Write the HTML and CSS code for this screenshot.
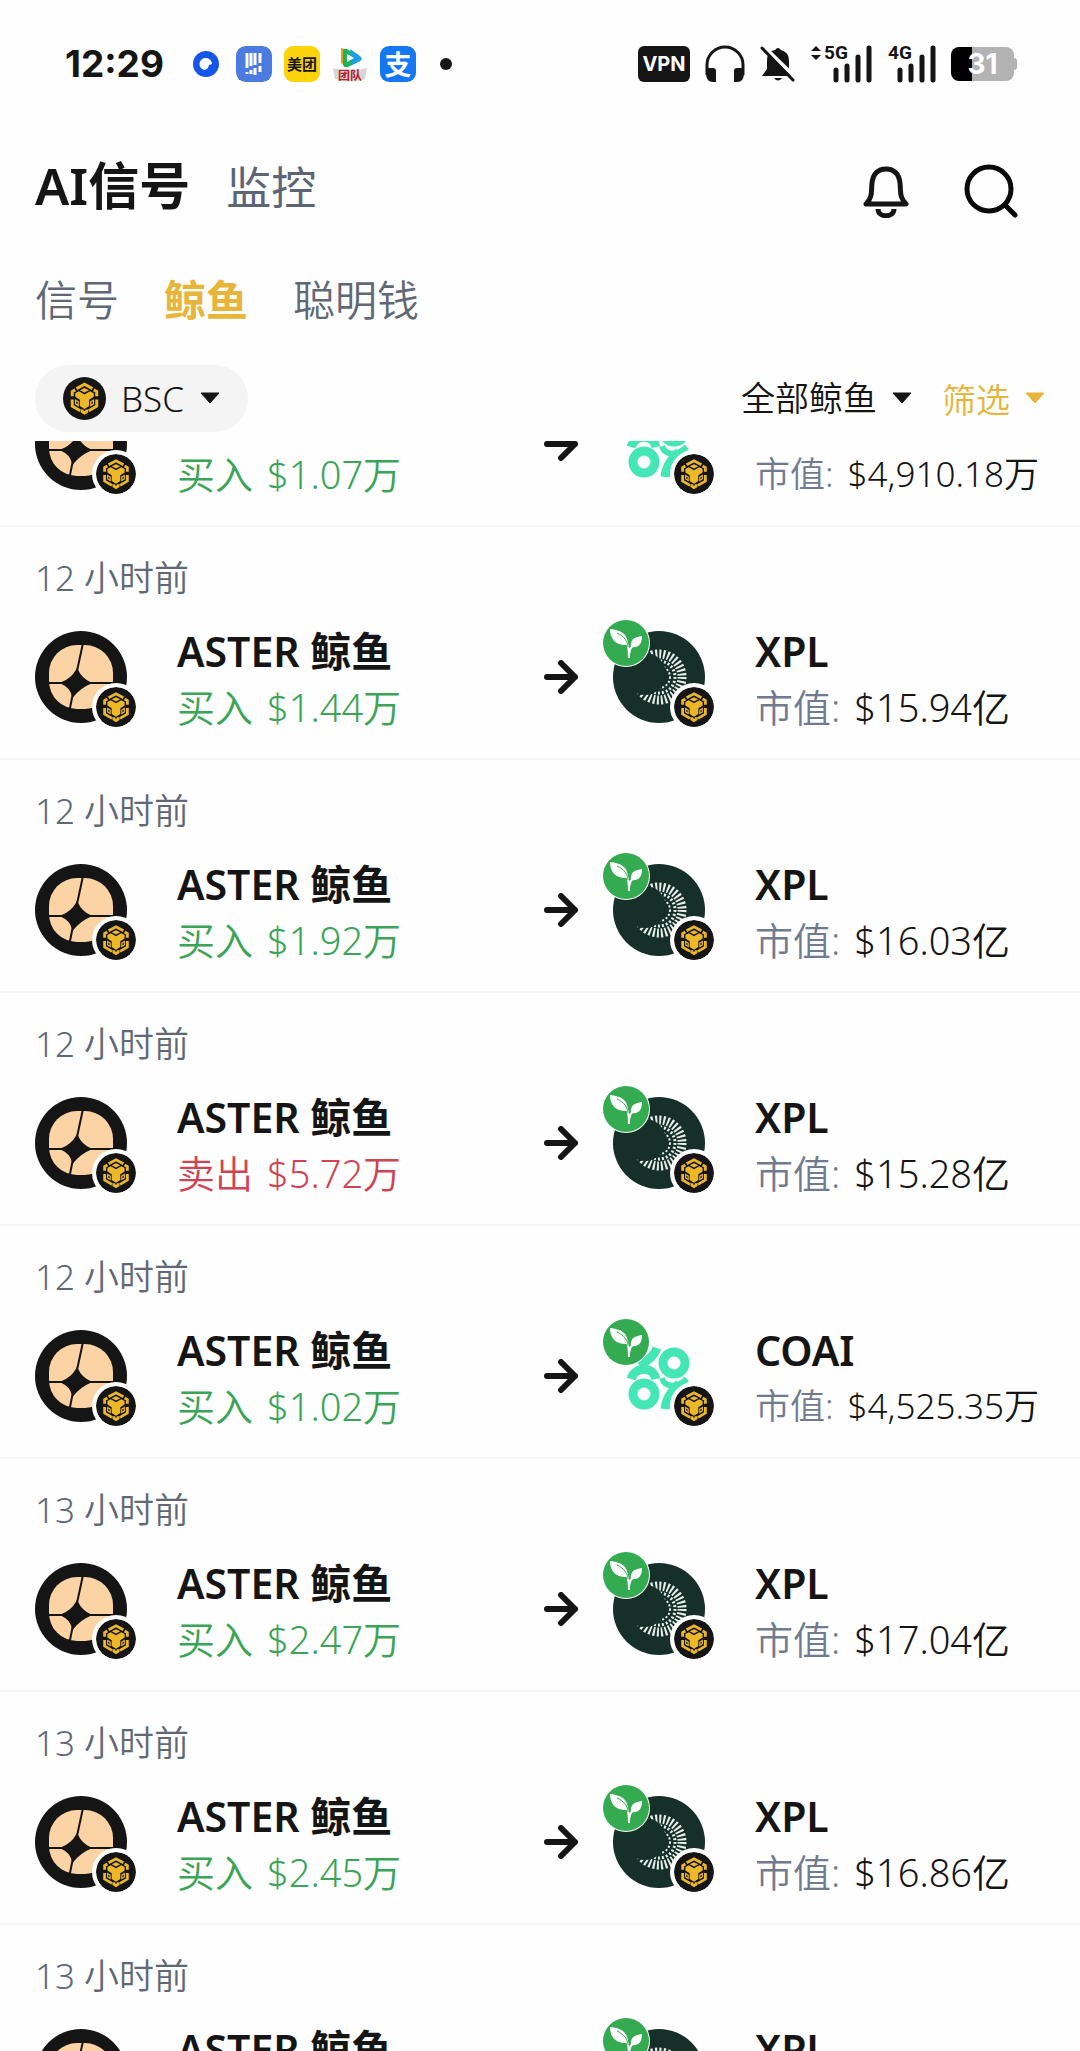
FILE: index.html
```
<!DOCTYPE html>
<html lang="zh-CN">
<head>
  <meta charset="UTF-8" />
  <meta name="viewport" content="width=device-width, initial-scale=1.0"/>
  <title>AI信号</title>
  <link rel="stylesheet" href="styles.css">
</head>
<body>
  <!-- Shared icons -->
  <svg class="sprite" aria-hidden="true">
    <symbol id="bnb" viewBox="0 0 130 130">
      <circle cx="65" cy="65" r="65" fill="#151515"/>
      <g fill="none" stroke="#ecb82a" stroke-width="9">
        <path d="M41 35L65 22L89 35"/>
        <path d="M28 58V44L37 39M102 58V44L93 39"/>
        <path d="M28 68V88L52 102M102 68V88L78 102"/>
        <path d="M58 98V105L65 109L72 105V98"/>
      </g>
      <path d="M65 33L79 40L65 47L51 40Z" fill="#ecb82a"/>
      <path d="M37 49L48 43L65 53L82 43L93 49V60L79 69V88L65 97L51 88V69L37 60Z" fill="#ecb82a"/>
      <path d="M38 70V81L46 86V75ZM92 70V81L84 86V75Z" fill="#151515" stroke="#ecb82a" stroke-width="4"/>
    </symbol>
    <symbol id="aster" viewBox="0 0 92 92">
      <circle cx="46" cy="46" r="46" fill="#151515"/>
      <rect x="14" y="14" width="64" height="64" rx="28" fill="#fbd3a5"/>
      <path d="M48 12L42 40M38 62L34 82M10 52H82" fill="none" stroke="#151515" stroke-width="2"/>
      <path d="M42 39Q46 48 55 52Q45 56 38 65Q36 56 27 52Q37 48 42 39Z" fill="#151515" stroke="#151515" stroke-width="2"/>
    </symbol>
    <symbol id="xpl" viewBox="0 0 92 92">
      <circle cx="46" cy="46" r="46" fill="#162f29"/>
      <g fill="none" stroke="#e6eeea">
        <circle cx="46" cy="46" r="23" stroke-width="9" stroke-dasharray="2 2"/>
        <circle cx="46" cy="46" r="16" stroke-width="3" stroke-dasharray="2 2"/>
        <circle cx="46" cy="46" r="11" stroke-width="2" stroke-dasharray="2 2"/>
      </g>
      <circle cx="32" cy="43" r="21" fill="#162f29"/>
    </symbol>
    <symbol id="coai" viewBox="0 0 92 92">
      <g fill="none" stroke="#45e6b5" stroke-width="9">
        <circle cx="61" cy="33" r="11"/>
        <circle cx="31" cy="64" r="11"/>
        <path d="M44 18C41 26 36 29 27 36"/>
        <path d="M18 49C22 36 40 36 43 49"/>
        <path d="M49 48C52 58 64 58 74 49" stroke-width="6"/>
        <path d="M66 54C59 61 53 68 52 79"/>
      </g>
    </symbol>
    <symbol id="leaf" viewBox="0 0 48 48">
      <circle cx="24" cy="24" r="24" fill="#fff"/>
      <circle cx="24" cy="24" r="23" fill="#34ab50"/>
      <path d="M8 10C19 11 26 15 26 26C15 27 8 21 8 10Z" fill="#fff"/>
      <path d="M40 17C40 26 36 29 29 28C28 21 32 18 40 17Z" fill="#fff"/>
      <path d="M25 24C27 29 27 32 27 39M31 26C28 29 28 31 27 35" fill="none" stroke="#fff" stroke-width="2"/>
      <path d="M15 14C22 17 26 23 26 28" fill="none" stroke="#34ab50" stroke-width="1"/>
    </symbol>
    <symbol id="arrow" viewBox="0 0 34 34">
      <path d="M3 17H31M17 3L31 17L17 31" fill="none" stroke="#151515" stroke-width="6" stroke-linecap="round" stroke-linejoin="round"/>
    </symbol>
    <symbol id="caret" viewBox="0 0 20 12">
      <path d="M1 1H19L10 11Z" fill="currentColor" stroke="currentColor" stroke-linejoin="round"/>
    </symbol>
  </svg>

  <div class="status-bar">
    <div class="status-left">
      <span class="clock">12:29</span>
      <svg class="app-dot" viewBox="0 0 26 26"><circle cx="13" cy="13" r="13" fill="#1556e8"/><path d="M13 7A6 6 0 0 1 19 13L16 14L15 17L12 19A6 6 0 1 1 13 7Z" fill="#fff"/></svg>
      <svg class="app-icon" viewBox="0 0 36 36"><rect width="36" height="36" rx="9" fill="#4b7be0"/><path d="M11 7V22M15 7V20M19 7V19M24 7V17M11 26V28M15 24V28M19 22V29M24 20V26" fill="none" stroke="#fff" stroke-width="3"/></svg>
      <span class="app-icon meituan">美团</span>
      <span class="app-icon video">
        <svg viewBox="0 0 36 36"><path d="M9 3Q9 1 12 3V19L9 17Z" fill="#f39a1d"/><path d="M11 4Q12 2 15 3L28 11Q31 13 28 15L16 21Q12 22 11 19Z" fill="#1cb35b"/><path d="M18 3L28 10Q31 13 28 15L20 19Z" fill="#1d9fe8"/><path d="M15 8L22 12L15 16Z" fill="#fff"/><path d="M1 22Q18 27 35 22L33 33Q18 38 3 33Z" fill="#d9d5d2"/></svg>
        <b>团队</b>
      </span>
      <span class="app-icon alipay">支</span>
      <span class="more-dot"></span>
    </div>
    <div class="status-right">
      <span class="vpn">VPN</span>
      <svg class="headphones" viewBox="0 0 40 38"><path d="M2 30V20A18 18 0 0 1 38 20V30" fill="none" stroke="#151515" stroke-width="3"/><path d="M1 23H8Q11 23 11 26V37H8Q1 37 1 28ZM39 23H32Q29 23 29 26V37H32Q39 37 39 28Z" fill="#151515"/></svg>
      <svg class="muted" viewBox="0 0 36 36"><path d="M2 30L7 23V15Q7 5 15 4Q18 0 21 4Q29 6 29 15V23L34 30Z" fill="#151515"/><path d="M14 32H22Q18 37 14 32Z" fill="#151515"/><path d="M3 0L36 32" stroke="#fff" stroke-width="4"/><path d="M2 2L33 34" stroke="#151515" stroke-width="3" stroke-linecap="round"/></svg>
      <span class="signal signal-5g">
        <svg viewBox="0 0 62 38"><path d="M0 6L5 1L10 6ZM0 10H10L5 15Z" fill="#151515"/><path d="M25 25V35M36 21V35M47 12V35M58 3V35" stroke="#151515" stroke-width="5" stroke-linecap="round"/></svg>
        <b>5G</b>
      </span>
      <span class="signal signal-4g">
        <svg viewBox="0 0 48 38"><path d="M12 25V35M23 21V35M34 12V35M45 3V35" stroke="#151515" stroke-width="5" stroke-linecap="round"/></svg>
        <b>4G</b>
      </span>
      <span class="battery">31</span>
    </div>
  </div>

  <header class="header">
    <nav class="sections">
      <a href="#ai" class="section active">AI信号</a>
      <a href="#monitor" class="section">监控</a>
    </nav>
    <div class="actions">
      <button type="button" aria-label="通知">
        <svg class="bell" viewBox="0 0 46 54"><path d="M3 40C10 33 8 27 9 19C10 10 15 5 23 5S36 10 37 19C38 27 36 33 43 40Z" fill="none" stroke="#151515" stroke-width="5" stroke-linejoin="round"/><path d="M15 45C15 54 31 54 31 45" fill="none" stroke="#151515" stroke-width="5"/></svg>
      </button>
      <button type="button" aria-label="搜索">
        <svg class="search" viewBox="0 0 54 54"><circle cx="25" cy="25" r="22" fill="none" stroke="#0a0a0a" stroke-width="5"/><path d="M41 41L51 51" stroke="#0a0a0a" stroke-width="5" stroke-linecap="round"/></svg>
      </button>
    </div>
  </header>

  <nav class="tabs">
    <a href="#signal">信号</a>
    <a href="#whale" class="active">鲸鱼</a>
    <a href="#smart">聪明钱</a>
  </nav>

  <div class="filters">
    <label class="picker chain-picker">
      <svg class="chain-icon"><use href="#bnb"/></svg>
      <select aria-label="链"><option>BSC</option></select>
      <svg class="caret"><use href="#caret"/></svg>
    </label>
    <label class="picker">
      <select aria-label="鲸鱼"><option>全部鲸鱼</option></select>
      <svg class="caret"><use href="#caret"/></svg>
    </label>
    <button type="button" class="picker filter-button">筛选 <svg class="caret"><use href="#caret"/></svg></button>
  </div>

  <main class="feed">
    <ul class="feed-list">
      <li class="row">
        <div class="trade">
          <div class="party">
            <div class="avatar"><svg><use href="#aster"/></svg><svg class="chain-badge"><use href="#bnb"/></svg></div>
            <div class="info"><p class="buy"><span>买入</span> $1.07万</p></div>
          </div>
          <svg class="arrow"><use href="#arrow"/></svg>
          <div class="party">
            <div class="avatar"><svg><use href="#coai"/></svg><svg class="chain-badge"><use href="#bnb"/></svg></div>
            <div class="info"><p class="cap long"><span>市值:</span> $4,910.18万</p></div>
          </div>
        </div>
      </li>
      <li class="row">
        <time class="time">12 小时前</time>
        <div class="trade">
          <div class="party">
            <div class="avatar"><svg><use href="#aster"/></svg><svg class="chain-badge"><use href="#bnb"/></svg></div>
            <div class="info"><h2>ASTER 鲸鱼</h2><p class="buy"><span>买入</span> $1.44万</p></div>
          </div>
          <svg class="arrow"><use href="#arrow"/></svg>
          <div class="party">
            <div class="avatar"><svg><use href="#xpl"/></svg><svg class="leaf-badge"><use href="#leaf"/></svg><svg class="chain-badge"><use href="#bnb"/></svg></div>
            <div class="info"><h2>XPL</h2><p class="cap"><span>市值:</span> $15.94亿</p></div>
          </div>
        </div>
      </li>
      <li class="row">
        <time class="time">12 小时前</time>
        <div class="trade">
          <div class="party">
            <div class="avatar"><svg><use href="#aster"/></svg><svg class="chain-badge"><use href="#bnb"/></svg></div>
            <div class="info"><h2>ASTER 鲸鱼</h2><p class="buy"><span>买入</span> $1.92万</p></div>
          </div>
          <svg class="arrow"><use href="#arrow"/></svg>
          <div class="party">
            <div class="avatar"><svg><use href="#xpl"/></svg><svg class="leaf-badge"><use href="#leaf"/></svg><svg class="chain-badge"><use href="#bnb"/></svg></div>
            <div class="info"><h2>XPL</h2><p class="cap"><span>市值:</span> $16.03亿</p></div>
          </div>
        </div>
      </li>
      <li class="row">
        <time class="time">12 小时前</time>
        <div class="trade">
          <div class="party">
            <div class="avatar"><svg><use href="#aster"/></svg><svg class="chain-badge"><use href="#bnb"/></svg></div>
            <div class="info"><h2>ASTER 鲸鱼</h2><p class="sell"><span>卖出</span> $5.72万</p></div>
          </div>
          <svg class="arrow"><use href="#arrow"/></svg>
          <div class="party">
            <div class="avatar"><svg><use href="#xpl"/></svg><svg class="leaf-badge"><use href="#leaf"/></svg><svg class="chain-badge"><use href="#bnb"/></svg></div>
            <div class="info"><h2>XPL</h2><p class="cap"><span>市值:</span> $15.28亿</p></div>
          </div>
        </div>
      </li>
      <li class="row">
        <time class="time">12 小时前</time>
        <div class="trade">
          <div class="party">
            <div class="avatar"><svg><use href="#aster"/></svg><svg class="chain-badge"><use href="#bnb"/></svg></div>
            <div class="info"><h2>ASTER 鲸鱼</h2><p class="buy"><span>买入</span> $1.02万</p></div>
          </div>
          <svg class="arrow"><use href="#arrow"/></svg>
          <div class="party">
            <div class="avatar"><svg><use href="#coai"/></svg><svg class="leaf-badge"><use href="#leaf"/></svg><svg class="chain-badge"><use href="#bnb"/></svg></div>
            <div class="info"><h2>COAI</h2><p class="cap long"><span>市值:</span> $4,525.35万</p></div>
          </div>
        </div>
      </li>
      <li class="row">
        <time class="time">13 小时前</time>
        <div class="trade">
          <div class="party">
            <div class="avatar"><svg><use href="#aster"/></svg><svg class="chain-badge"><use href="#bnb"/></svg></div>
            <div class="info"><h2>ASTER 鲸鱼</h2><p class="buy"><span>买入</span> $2.47万</p></div>
          </div>
          <svg class="arrow"><use href="#arrow"/></svg>
          <div class="party">
            <div class="avatar"><svg><use href="#xpl"/></svg><svg class="leaf-badge"><use href="#leaf"/></svg><svg class="chain-badge"><use href="#bnb"/></svg></div>
            <div class="info"><h2>XPL</h2><p class="cap"><span>市值:</span> $17.04亿</p></div>
          </div>
        </div>
      </li>
      <li class="row">
        <time class="time">13 小时前</time>
        <div class="trade">
          <div class="party">
            <div class="avatar"><svg><use href="#aster"/></svg><svg class="chain-badge"><use href="#bnb"/></svg></div>
            <div class="info"><h2>ASTER 鲸鱼</h2><p class="buy"><span>买入</span> $2.45万</p></div>
          </div>
          <svg class="arrow"><use href="#arrow"/></svg>
          <div class="party">
            <div class="avatar"><svg><use href="#xpl"/></svg><svg class="leaf-badge"><use href="#leaf"/></svg><svg class="chain-badge"><use href="#bnb"/></svg></div>
            <div class="info"><h2>XPL</h2><p class="cap"><span>市值:</span> $16.86亿</p></div>
          </div>
        </div>
      </li>
      <li class="row">
        <time class="time">13 小时前</time>
        <div class="trade">
          <div class="party">
            <div class="avatar"><svg><use href="#aster"/></svg><svg class="chain-badge"><use href="#bnb"/></svg></div>
            <div class="info"><h2>ASTER 鲸鱼</h2></div>
          </div>
          <svg class="arrow"><use href="#arrow"/></svg>
          <div class="party">
            <div class="avatar"><svg><use href="#xpl"/></svg><svg class="leaf-badge"><use href="#leaf"/></svg><svg class="chain-badge"><use href="#bnb"/></svg></div>
            <div class="info"><h2>XPL</h2></div>
          </div>
        </div>
      </li>
    </ul>
  </main>
</body>
</html>
```
FILE: styles.css
```
* {
  box-sizing: border-box;
}

body {
  display: flex;
  flex-direction: column;
  height: 100vh;
  margin: 0;
  overflow: hidden;
  background-color: #fefefe;
  color: #151515;
  font-family: "Noto Sans", "Noto Sans CJK SC", sans-serif;
  font-size: 35px;
  font-weight: 350;
}

a {
  color: inherit;
  text-decoration: none;
}

button,
select {
  padding: 0;
  border: none;
  background: none;
  color: inherit;
  font: inherit;
  cursor: pointer;
}

svg {
  display: block;
}

.sprite {
  position: absolute;
  width: 0;
  height: 0;
}

/* Status bar */
.status-bar {
  display: flex;
  align-items: center;
  justify-content: space-between;
  flex: none;
  height: 127px;
  padding: 0 63px 0 65px;
  font-family: Inter, sans-serif;
}

.status-left {
  display: flex;
  align-items: center;
  gap: 12px;
}

.clock {
  margin-right: 17px;
  font-size: 37px;
  font-weight: 700;
}

.app-dot {
  width: 26px;
  height: 26px;
  margin-right: 5px;
}

.app-icon {
  width: 36px;
  height: 36px;
  border-radius: 9px;
}

.meituan,
.alipay {
  display: flex;
  align-items: center;
  justify-content: center;
  font-family: "Noto Sans CJK SC", sans-serif;
  font-weight: 700;
  white-space: nowrap;
}

.meituan {
  background-color: #fcd20a;
  font-size: 15px;
}

.alipay {
  background-color: #1677f5;
  color: #fff;
  font-size: 27px;
}

.video {
  position: relative;
}

.video b {
  position: absolute;
  inset: auto 0 0;
  color: #b3202c;
  font-family: "Noto Sans CJK SC", sans-serif;
  font-size: 12px;
  font-weight: 700;
  line-height: 14px;
  text-align: center;
}

.more-dot {
  width: 12px;
  height: 12px;
  margin-left: 12px;
  border-radius: 50%;
  background-color: #151515;
}

.status-right {
  display: flex;
  align-items: center;
  gap: 15px;
}

.vpn {
  width: 52px;
  border-radius: 6px;
  background-color: #151515;
  color: #fff;
  font-size: 20px;
  font-weight: 700;
  line-height: 36px;
  text-align: center;
}

.headphones {
  width: 40px;
  height: 38px;
}

.muted {
  width: 36px;
  height: 36px;
}

.signal {
  position: relative;
  height: 38px;
}

.signal svg {
  height: 38px;
}

.signal b {
  position: absolute;
  top: 0;
  left: 0;
  font-family: Roboto, sans-serif;
  font-size: 19px;
  font-weight: 700;
  line-height: 16px;
}

.signal-5g svg {
  width: 62px;
}

.signal-5g b {
  left: 13px;
}

.signal-4g svg {
  width: 48px;
}

.battery {
  position: relative;
  width: 63px;
  margin-right: 3px;
  border-radius: 8px;
  background: linear-gradient(to right, #000 21px, #b3b3b3 21px);
  color: #fff;
  font-size: 28px;
  font-weight: 700;
  line-height: 34px;
  text-align: center;
}

.battery::after {
  content: "";
  position: absolute;
  top: 11px;
  right: -3px;
  width: 3px;
  height: 12px;
  border-radius: 0 3px 3px 0;
  background-color: #b3b3b3;
}

/* Header */
.header {
  display: flex;
  align-items: center;
  justify-content: space-between;
  flex: none;
  height: 120px;
  padding: 0 62px 8px 35px;
}

.sections {
  display: flex;
  align-items: baseline;
  gap: 36px;
}

.section {
  color: #5d6575;
  font-size: 45px;
  font-weight: 400;
}

.section.active {
  color: #151515;
  font-size: 51px;
  font-weight: 600;
}

.actions {
  display: flex;
  align-items: center;
  gap: 55px;
  padding-top: 16px;
}

.bell {
  width: 46px;
  height: 54px;
}

.search {
  width: 54px;
  height: 54px;
}

.tabs {
  display: flex;
  align-items: center;
  flex: none;
  gap: 45px;
  height: 104px;
  padding: 0 35px 4px;
  color: #5f6874;
  font-size: 42px;
}

.tabs .active {
  color: #e6b53a;
  font-weight: 700;
}

/* Filters */
.filters {
  display: flex;
  align-items: center;
  flex: none;
  gap: 30px;
  height: 90px;
  padding: 4px 35px 0;
  font-size: 34px;
}

.picker {
  display: flex;
  align-items: center;
  gap: 15px;
}

.picker select {
  appearance: none;
}

.chain-picker {
  height: 67px;
  margin-right: auto;
  padding: 0 28px;
  border-radius: 34px;
  background-color: #f4f4f4;
  font-size: 35px;
}

.chain-icon {
  width: 43px;
  height: 43px;
}

.caret {
  width: 20px;
  height: 12px;
}

.filter-button {
  color: #e6b53a;
}

/* Feed */
.feed {
  flex: 1;
  min-height: 0;
  overflow: hidden;
}

.feed-list {
  margin: -147px 0 0;
  padding: 0;
  list-style: none;
}

.row {
  display: flex;
  flex-direction: column;
  justify-content: space-between;
  height: 233px;
  padding: 26px 35px 27px;
  border-bottom: 2px solid #f5f5f5;
}

.time {
  color: #5f6874;
  line-height: 50px;
}

.trade {
  display: grid;
  grid-template-columns: minmax(0, 1fr) 34px 432px;
  align-items: center;
  gap: 35px;
  margin-top: auto;
}

.party {
  display: flex;
  gap: 50px;
  height: 108px;
}

.avatar {
  position: relative;
  flex: none;
  width: 92px;
  height: 92px;
  margin-top: 8px;
}

.avatar svg {
  width: 92px;
  height: 92px;
}

.avatar .chain-badge {
  position: absolute;
  right: -13px;
  bottom: -8px;
  width: 48px;
  height: 48px;
  border: 4px solid #fefefe;
  border-radius: 50%;
  background-color: #fefefe;
}

.avatar .leaf-badge {
  position: absolute;
  top: -12px;
  left: -11px;
  width: 48px;
  height: 48px;
}

.arrow {
  width: 34px;
  height: 34px;
}

.info h2,
.info p {
  margin: 0;
  line-height: 56px;
  white-space: nowrap;
}

.info h2 {
  font-size: 41px;
  font-weight: 600;
}

.info p {
  display: flex;
  gap: 14px;
  font-size: 38px;
}

.info p.long {
  font-size: 35px;
}

.info p:first-child {
  margin-top: 56px;
}

.buy {
  color: #3aa457;
}

.sell {
  color: #cf4452;
}

.cap span {
  color: #717b8f;
}
```
